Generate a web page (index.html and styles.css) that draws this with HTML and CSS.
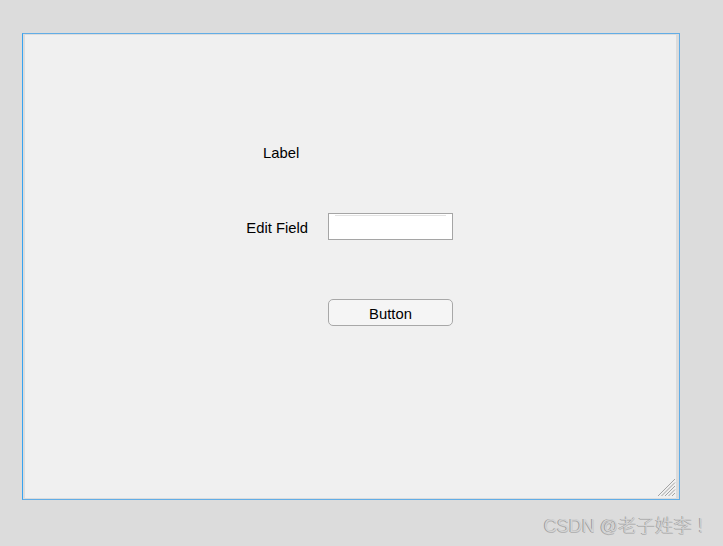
FILE: index.html
```html
<!DOCTYPE html>
<html lang="en">
<head>
    <meta charset="UTF-8">
    <meta name="viewport" content="width=device-width, initial-scale=1.0">
    <title>App Designer</title>
    <link rel="stylesheet" href="styles.css">
</head>
<body>
    <div class="canvas">
        <div class="form">
            <div class="label-row">Label</div>
            <div class="field-row">
                <label class="field-label" for="editField">Edit Field</label>
                <input class="edit-field" id="editField" type="text">
            </div>
            <div class="button-row">
                <button class="app-button">Button</button>
            </div>
        </div>

        <svg class="grip" width="19" height="19" viewBox="0 0 19 19">
            <g stroke="#a3a3a3" stroke-width="1">
                <line x1="1" y1="18" x2="18" y2="1"/>
                <line x1="4.5" y1="18" x2="18" y2="4.5"/>
                <line x1="8" y1="18" x2="18" y2="8"/>
                <line x1="11.5" y1="18" x2="18" y2="11.5"/>
                <line x1="15" y1="18" x2="18" y2="15"/>
            </g>
        </svg>
    </div>

    <div class="watermark">CSDN @<span class="cjk">老子姓李</span><span class="bang">！</span></div>
</body>
</html>
```

FILE: styles.css
```css
html {
    background: #dcdcdc;
}

body {
    margin: 0;
    padding: 0;
    height: 546px;
    position: relative;
    font-family: "Liberation Sans", Arial, sans-serif;
    color: #000;
}

.canvas {
    position: relative;
    box-sizing: border-box;
    width: 658px;
    height: 467px;
    margin: 33px 0 0 22px;
    background: #f0f0f0;
    border: 1px solid #62ade6;
    border-left-color: #37a3f0;
    box-shadow: inset 2px 1px 0 #dcdcdc, inset -3px -1px 0 #dcdcdc;
}

.form {
    display: flex;
    flex-direction: column;
    padding-top: 110px;
    font-size: 14.8px;
}

.label-row {
    line-height: 18px;
    padding-left: 240px;
}

.field-row {
    display: flex;
    align-items: flex-start;
    margin-top: 51px;
}

.field-label {
    width: 285px;
    text-align: right;
    line-height: 26px;
    padding-top: 2px;
    margin-right: 20px;
}

.edit-field {
    box-sizing: border-box;
    width: 125px;
    height: 27px;
    margin: 0;
    border: 1px solid #a5a5a5;
    background: linear-gradient(#e2e2e2, #e2e2e2) no-repeat 6px 1px / calc(100% - 12px) 1px, #fff;
    font: inherit;
    outline: none;
}

.button-row {
    margin-top: 58px;
    padding-left: 305px;
}

.app-button {
    box-sizing: border-box;
    width: 125px;
    height: 27px;
    margin: 0;
    padding: 2px 0 0;
    border: 1px solid #a8a8a8;
    border-radius: 5px;
    background: #f5f5f5;
    font: inherit;
    color: #000;
    line-height: 18px;
}

.grip {
    position: absolute;
    right: 3px;
    bottom: 2px;
}

.watermark {
    position: absolute;
    left: 544px;
    top: 513px;
    font-family: "Liberation Sans", "Noto Sans CJK SC", sans-serif;
    font-size: 18px;
    line-height: 22px;
    color: #d4d4d4;
    text-shadow: -1px 0 0 #9c9c9c, 0 1px 0 #b4b4b4;
    white-space: nowrap;
}

.cjk {
    font-family: "Noto Sans CJK SC", sans-serif;
    font-size: 18.5px;
    font-weight: 300;
}

.bang {
    font-family: "Noto Sans CJK SC", sans-serif;
    font-weight: 300;
    padding-left: 4px;
}
```
